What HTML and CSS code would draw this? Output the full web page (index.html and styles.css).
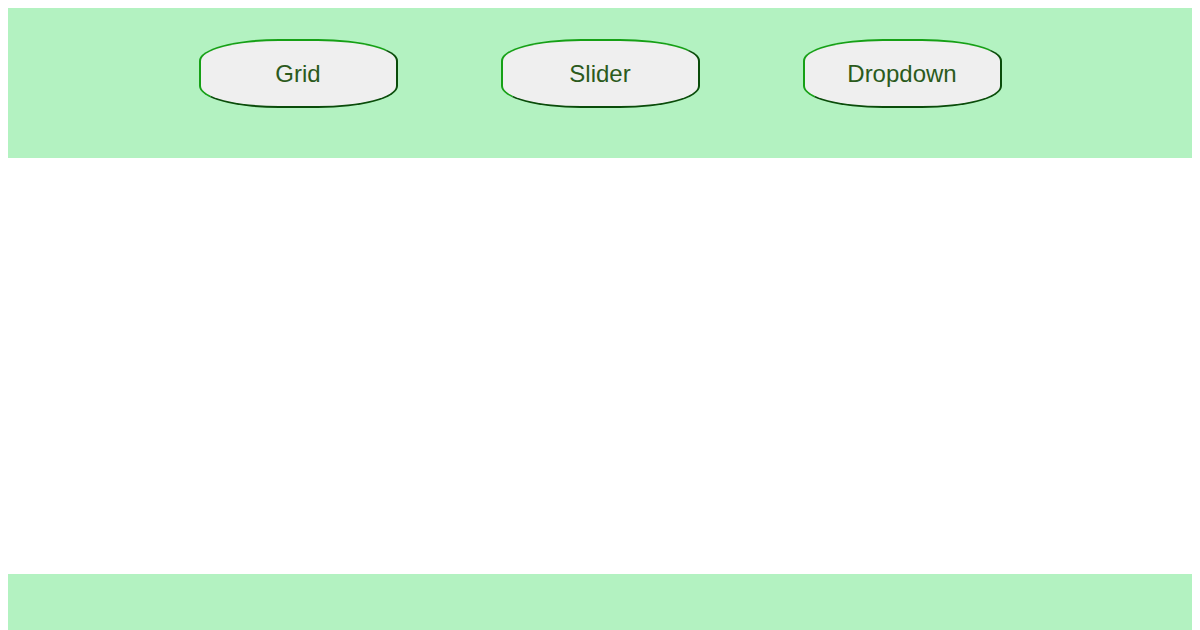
FILE: index.html
```html
<html lang="en">

<head>
    <meta charset="UTF-8">
    <meta name="viewport" content="width=device-width, initial-scale=1.0">
    <title>Components</title>
    <link rel="stylesheet" href="styles.css">
</head>

<body>
    <header>
        <nav>
            <button class="tab">Grid</button>
            <button class="tab">Slider</button>
            <button class="tab">Dropdown</button>
        </nav>
    </header>

    <main></main>

    <footer></footer>
</body>

</html>
```

FILE: styles.css
```css
body {
    font-family: 'Liberation Sans', Arial, sans-serif;
    background-color: #fff;
}

header {
    background-color: #b3f2c1;
    height: 150px;
    box-sizing: border-box;
    padding-top: 31px;
}

nav {
    display: flex;
    justify-content: center;
    gap: 103px;
}

.tab {
    width: 199px;
    height: 69px;
    background-color: #efefef;
    border: 2px outset #16a016;
    border-radius: 80px / 22px;
    font-family: 'Liberation Sans', Arial, sans-serif;
    font-size: 24px;
    color: #2b5a1c;
    cursor: pointer;
}

main {
    height: 416px;
}

footer {
    background-color: #b3f2c1;
    height: 60px;
}
```
